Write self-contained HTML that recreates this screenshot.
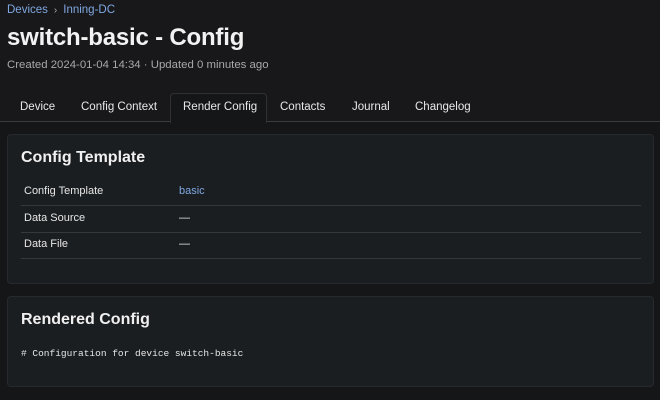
<!DOCTYPE html>
<html><head><style>
*{margin:0;padding:0;box-sizing:border-box}
body{width:660px;height:400px;overflow:hidden;background:#141618;font-family:"Liberation Sans",sans-serif;color:#e6e6e6;position:relative}
.hdr{position:absolute;left:0;top:0;width:660px;height:122px;background:#18181b;border-bottom:1px solid #3a3b3e}
.bc{position:absolute;left:7px;top:4px;font-size:11.5px;color:#7fa7e0}
.bc span{color:#aaa;margin:0 6px;font-size:10px}
h1{position:absolute;left:7px;top:24px;font-size:24px;font-weight:bold;color:#f2f2f2;letter-spacing:-0.2px}
.meta{position:absolute;left:7px;top:59px;font-size:11.4px;color:#a8a8a8}
.tab{position:absolute;top:101px;font-size:11.5px;color:#e8e8e8}
.act{position:absolute;left:170px;top:93px;width:97px;height:30px;background:#141618;border:1px solid #2e3034;border-bottom:none;border-radius:4px 4px 0 0}
.card{position:absolute;left:7px;width:647px;background:#1b1e21;border:1px solid #26292d;border-radius:4px}
.ct{position:absolute;left:13px;font-size:16px;font-weight:bold;color:#f0f0f0}
.row{position:absolute;left:13px;width:620px;height:27px;border-bottom:1px solid #35383c;font-size:11px;color:#e6e6e6}
.row .k{position:absolute;left:3px;top:6px}
.row .v{position:absolute;left:158px;top:6px}
pre{position:absolute;left:13px;top:51px;font-family:"Liberation Mono",monospace;font-size:9.5px;color:#e6e6e6}
</style></head><body>
<div class="hdr">
<div class="bc">Devices<span>›</span>Inning-DC</div>
<h1>switch-basic - Config</h1>
<div class="meta">Created 2024-01-04 14:34 · Updated 0 minutes ago</div>
<div class="act"></div>
<div class="tab" style="left:20px">Device</div>
<div class="tab" style="left:81px">Config Context</div>
<div class="tab" style="left:183px">Render Config</div>
<div class="tab" style="left:280px">Contacts</div>
<div class="tab" style="left:352px">Journal</div>
<div class="tab" style="left:415px">Changelog</div>
</div>
<div class="card" style="top:134px;height:150px">
<div class="ct" style="top:14px">Config Template</div>
<div class="row" style="top:44px"><span class="k">Config Template</span><span class="v" style="color:#7fa7e0">basic</span></div>
<div class="row" style="top:71px"><span class="k">Data Source</span><span class="v">—</span></div>
<div class="row" style="top:97px"><span class="k">Data File</span><span class="v">—</span></div>
</div>
<div class="card" style="top:296px;height:91px">
<div class="ct" style="top:14px">Rendered Config</div>
<pre># Configuration for device switch-basic</pre>
</div>
</body></html>
